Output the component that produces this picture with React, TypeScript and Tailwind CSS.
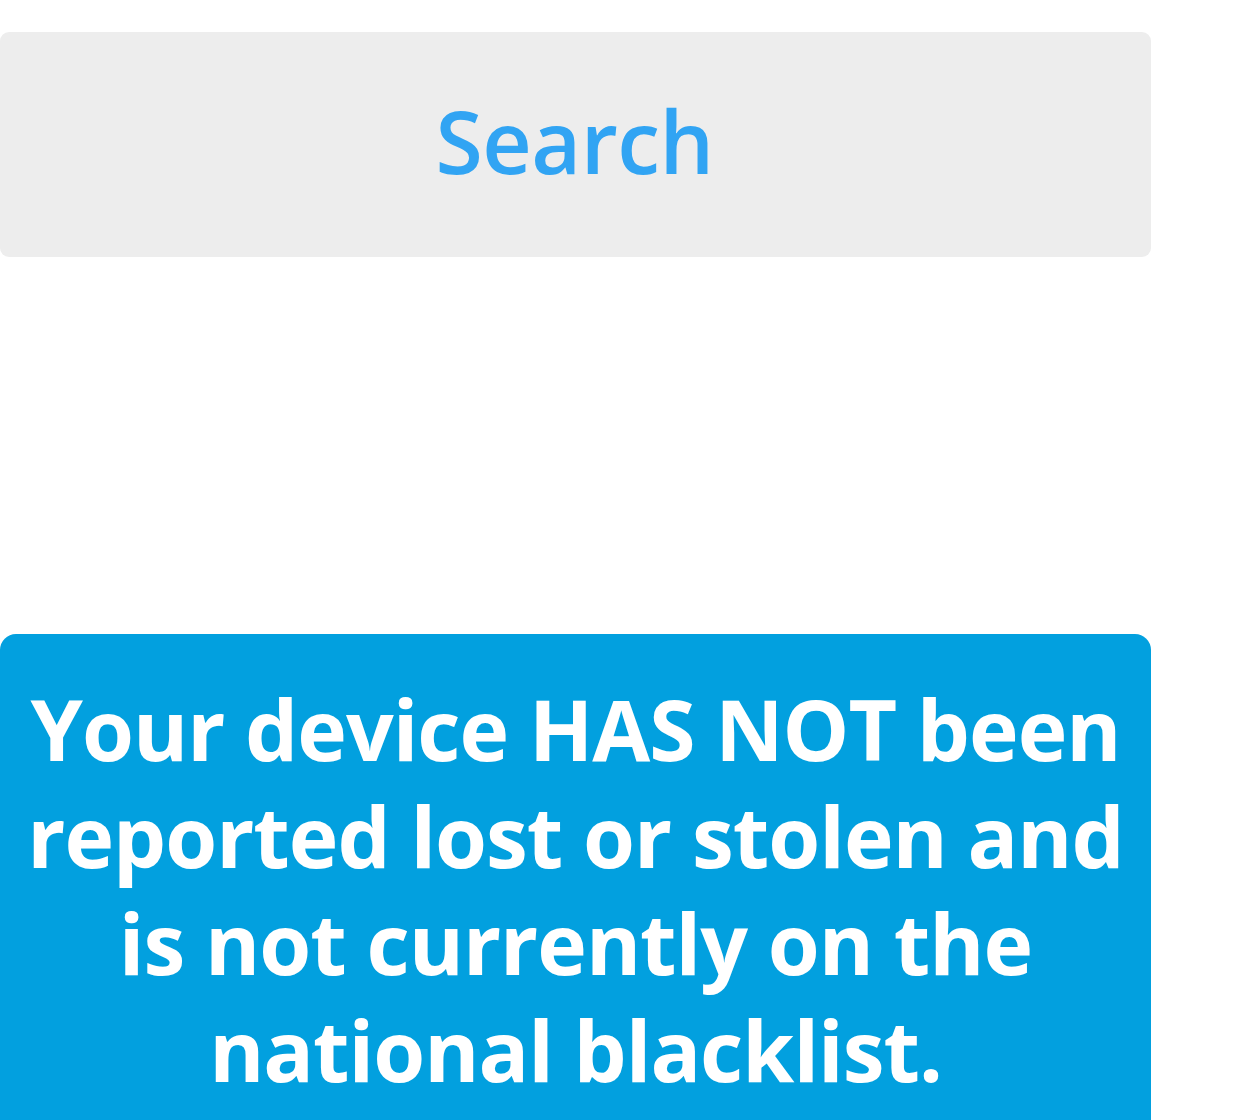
export default function App() {
  return (
    <div className="w-[1246px] bg-white pt-[32px]" style={{ fontFamily: '"Open Sans", "Noto Sans", sans-serif' }}>
      <div className="w-[1151px] h-[225px] rounded-[9px] bg-[#ededed] flex items-center justify-center">
        <span className="text-[86px] font-semibold text-[#31a4f3] leading-none tracking-[-0.5px] mb-[7px] ml-[-2px]">Search</span>
      </div>
      <div className="h-[377px]" />
      <div className="w-[1151px] rounded-t-[16px] bg-[#02a0df] pt-[41px] pb-[60px] text-center text-white font-bold text-[84px] leading-[107px] tracking-[-1px]">
        <div className="whitespace-nowrap">Your device HAS NOT been</div>
        <div className="whitespace-nowrap">reported lost or stolen and</div>
        <div className="whitespace-nowrap">is not currently on the</div>
        <div className="whitespace-nowrap">national blacklist.</div>
      </div>
    </div>
  );
}
